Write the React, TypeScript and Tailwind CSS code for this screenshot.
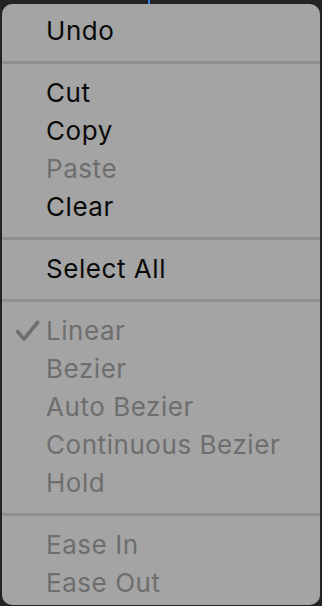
import React from "react";

type Item = { label: string; disabled?: boolean; checked?: boolean } | "sep";

const items: Item[] = [
  { label: "Undo" },
  "sep",
  { label: "Cut" },
  { label: "Copy" },
  { label: "Paste", disabled: true },
  { label: "Clear" },
  "sep",
  { label: "Select All" },
  "sep",
  { label: "Linear", disabled: true, checked: true },
  { label: "Bezier", disabled: true },
  { label: "Auto Bezier", disabled: true },
  { label: "Continuous Bezier", disabled: true },
  { label: "Hold", disabled: true },
  "sep",
  { label: "Ease In", disabled: true },
  { label: "Ease Out", disabled: true },
];

function Check() {
  return (
    <svg
      className="absolute left-[12px] top-[8px]"
      width="26"
      height="22"
      viewBox="0 0 26 22"
      fill="none"
    >
      <path
        d="M3.5 11.5 L10 19 L23.5 2.5"
        stroke="#6f6f6f"
        strokeWidth="3.6"
        strokeLinecap="round"
        strokeLinejoin="round"
      />
    </svg>
  );
}

export default function App() {
  return (
    <div
      className="relative w-full h-[606px] overflow-hidden bg-[#232323] pt-[4px] px-[2px]"
      style={{ fontFamily: "Inter, 'Liberation Sans', sans-serif" }}
    >
      <div className="absolute left-[148px] top-0 w-[2px] h-[4px] bg-[#2f7fe6]" />
      <div className="rounded-[10px] bg-[#a4a4a4] pt-[8px] pb-[3px] w-[318px]">
        {items.map((it, i) =>
          it === "sep" ? (
            <div key={i} className="h-[24px] flex items-center">
              <div className="w-full h-[3px] bg-[#8f8f8f]" />
            </div>
          ) : (
            <div
              key={i}
              className={
                "relative h-[38px] flex items-center pl-[44px] text-[26px] leading-none tracking-[0.55px] " +
                (it.disabled ? "text-[#6e6e6e]" : "text-[#0a0a0a]")
              }
            >
              {it.checked && <Check />}
              <span>{it.label}</span>
            </div>
          )
        )}
      </div>
    </div>
  );
}
